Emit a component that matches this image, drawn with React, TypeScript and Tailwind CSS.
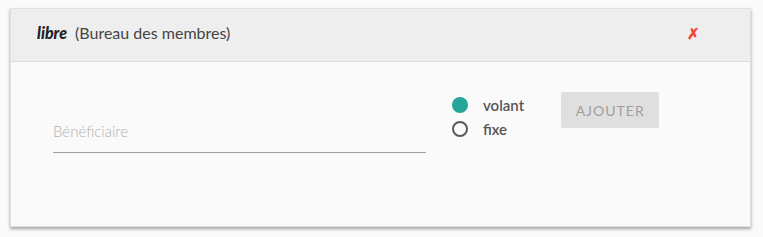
export default function App() {
  return (
    <div className="min-h-screen bg-[#fafafa] pt-2 pl-[10px] font-['Lato',sans-serif]" style={{ width: 763, height: 237 }}>
      <div className="w-[741px] bg-[#fafafa] shadow-[0_2px_3px_rgba(0,0,0,0.35)] border border-[#e0e0e0]">
        <div className="h-[53px] bg-[#eeeeee] border-b border-[#dddddd] flex items-center pl-[26px] pr-[50px] pb-[4px]">
          <span className="font-black italic text-[16px] text-[#222]">libre</span>
          <span className="ml-[8px] text-[16px] text-[#444]">(Bureau des membres)</span>
          <span className="ml-auto text-[#f44336] text-[15px] font-bold">✗</span>
        </div>
        <div className="h-[164px] flex items-start pl-[42px]">
          <div className="w-[373px] mt-[55px]">
            <div className="h-[36px] flex items-center pb-[6px] border-b border-[#9e9e9e] text-[15px] text-[#b0b0b0] font-light">
              Bénéficiaire
            </div>
          </div>
          <div className="ml-[26px] mt-[33px] flex flex-col gap-[4px]">
            <label className="flex items-center h-[20px] gap-[15px] text-[15px] font-semibold text-[#555]">
              <span className="w-[16px] h-[16px] rounded-full bg-[#26a69a]" />
              volant
            </label>
            <label className="flex items-center h-[20px] gap-[15px] text-[15px] font-semibold text-[#555]">
              <span className="w-[16px] h-[16px] rounded-full border-2 border-[#5a5a5a]" />
              fixe
            </label>
          </div>
          <button className="ml-[37px] mt-[30px] w-[98px] h-[36px] rounded-[2px] bg-[#dfdfdf] text-[#9f9f9f] text-[14px] tracking-[1px]">
            AJOUTER
          </button>
        </div>
      </div>
    </div>
  )
}
